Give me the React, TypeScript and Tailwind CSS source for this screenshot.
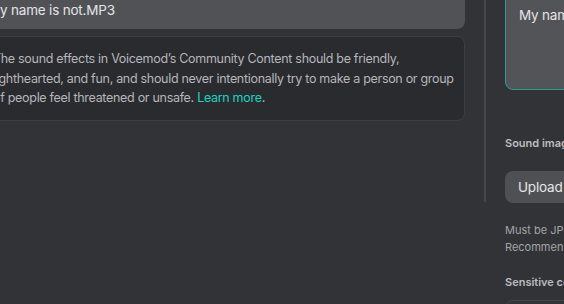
import React from "react";

export default function App() {
  return (
    <div
      className="w-[564px] h-[304px] overflow-hidden bg-[#323337] flex items-start"
      style={{ fontFamily: "Inter, 'Noto Sans', sans-serif" }}
    >
      {/* Left column */}
      <div className="shrink-0 w-[477px] -ml-[12px] flex flex-col">
        <div className="shrink-0 -mt-[8px] h-[37px] bg-[#515256] rounded-b-lg flex items-center text-[13.5px] tracking-[-0.2px] text-[#e4e4e6] whitespace-nowrap">
          <span>My name is not.MP3</span>
        </div>
        <div className="shrink-0 mt-[7px] bg-[#2a2b2f] border border-[#3d3e42] rounded-lg pt-3 pb-3 pl-[4px] pr-4 text-[12.5px] tracking-[-0.3px] leading-[19.5px] text-[#b6b6bb] whitespace-nowrap">
          <div>The sound effects in Voicemod’s Community Content should be friendly,</div>
          <div>lighthearted, and fun, and should never intentionally try to make a person or group</div>
          <div>
            of people feel threatened or unsafe. <span className="text-[#1cd2c4]">Learn more</span>.
          </div>
        </div>
      </div>

      {/* Divider */}
      <div className="shrink-0 ml-[19px] w-[2px] h-[202px] bg-[#45464a]" />

      {/* Right column */}
      <div className="shrink-0 w-[300px] ml-[19px] flex flex-col">
        <div className="shrink-0 -mt-[20px] h-[110px] bg-[#535458] border border-[#2b9d93] rounded-lg px-[13px] pt-[24px] text-[13.5px] tracking-[-0.2px] text-[#e4e4e6] whitespace-nowrap">
          My name is not.MP3
        </div>
        <div className="shrink-0 mt-[46px] text-[11px] font-semibold text-[#bcbcc0] leading-[14px] whitespace-nowrap">
          Sound image
        </div>
        <div className="shrink-0 mt-[21px] h-[32px] w-[140px] bg-[#4f5054] rounded-lg flex items-center px-[13px] text-[13.5px] tracking-[-0.2px] text-[#e6e6e8] whitespace-nowrap">
          Upload new
        </div>
        <div className="shrink-0 mt-[19px] text-[11px] leading-[17px] text-[#a3a3a7] whitespace-nowrap">
          <div>Must be JPEG or PNG</div>
          <div>Recommended size</div>
        </div>
        <div className="shrink-0 mt-[19px] text-[11px] font-semibold text-[#bcbcc0] leading-[14px] whitespace-nowrap">
          Sensitive content
        </div>
        <div className="shrink-0 mt-[11px] h-[30px] w-[100px] border border-[#46474b] rounded-lg" />
      </div>
    </div>
  );
}
